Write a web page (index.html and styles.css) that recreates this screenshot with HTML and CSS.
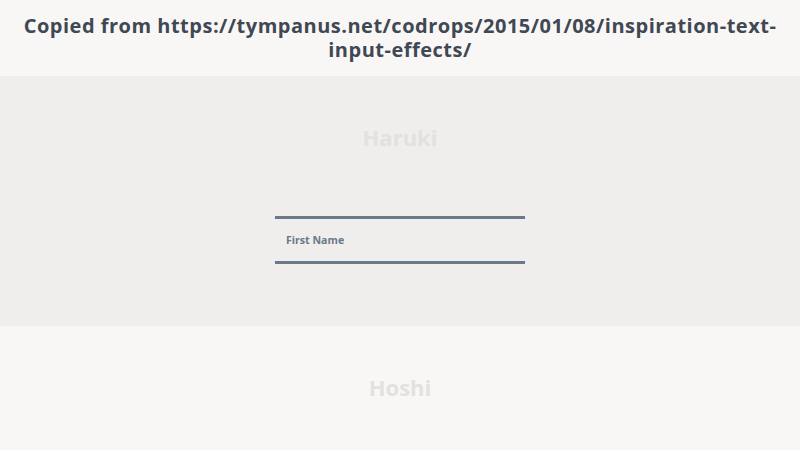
FILE: index.html
```html
<!DOCTYPE html>
<html>
<head>
<meta charset="utf-8">
<link rel="stylesheet" href="styles.css">
</head>
<body>
<header class="top">
  <h1 class="title">Copied from https://tympanus.net/codrops/2015/01/08/inspiration-text-input-effects/</h1>
</header>
<section class="demo demo--dark">
  <h2 class="demo__name">Haruki</h2>
  <div class="field">
    <span class="field__label">First Name</span>
  </div>
</section>
<section class="demo demo--last">
  <h2 class="demo__name">Hoshi</h2>
</section>
</body>
</html>
```

FILE: styles.css
```css
html, body {
  margin: 0;
  padding: 0;
}
body {
  background: #f9f7f6;
  font-family: "Open Sans", Lato, sans-serif;
  color: #3f4853;
  height: 450px;
  overflow: hidden;
  display: flex;
  flex-direction: column;
}
.top {
  height: 76px;
  flex: none;
  box-sizing: border-box;
  padding: 14px 18px 0;
  background: #f9f7f6;
}
.title {
  margin: 0;
  font-size: 20px;
  line-height: 24px;
  font-weight: 700;
  letter-spacing: 0.5px;
  text-align: center;
  color: #3f4853;
}
.demo {
  height: 250px;
  flex: none;
  box-sizing: border-box;
  padding-top: 48px;
  display: flex;
  flex-direction: column;
  align-items: center;
}
.demo--dark {
  background: #efeeec;
}
.demo--last {
  flex: 1;
  height: auto;
  min-height: 0;
}
.demo__name {
  margin: 0;
  font-size: 22px;
  line-height: 26px;
  font-weight: 700;
  color: #e2e1df;
}
.field {
  margin-top: 66px;
  width: 250px;
  height: 48px;
  box-sizing: border-box;
  border-top: 3px solid #6a7989;
  border-bottom: 3px solid #6a7989;
  display: flex;
  align-items: center;
  padding-left: 11px;
}
.field__label {
  font-size: 10.6px;
  font-weight: 700;
  color: #6a7989;
}
```
